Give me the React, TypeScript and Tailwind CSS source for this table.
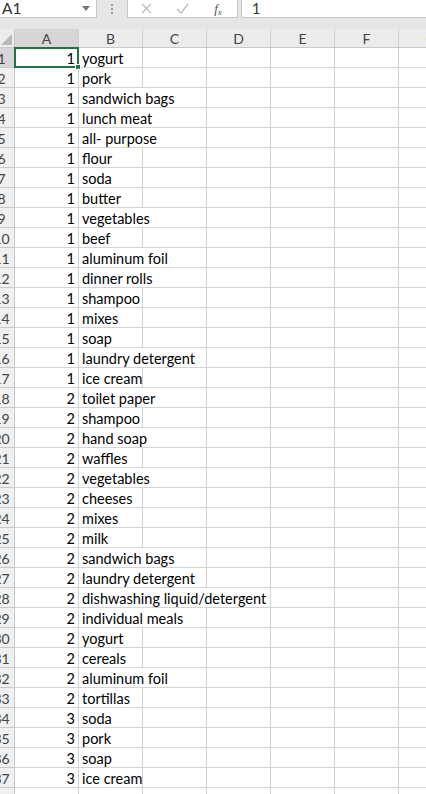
import * as React from "react";

type Row = { n: number; item: string; span: number };

// span = how many columns the text in B runs over (Excel overflow)
const rows: Row[] = [
  { n: 1, item: "yogurt", span: 1 },
  { n: 1, item: "pork", span: 1 },
  { n: 1, item: "sandwich bags", span: 2 },
  { n: 1, item: "lunch meat", span: 2 },
  { n: 1, item: "all- purpose", span: 2 },
  { n: 1, item: "flour", span: 1 },
  { n: 1, item: "soda", span: 1 },
  { n: 1, item: "butter", span: 1 },
  { n: 1, item: "vegetables", span: 2 },
  { n: 1, item: "beef", span: 1 },
  { n: 1, item: "aluminum foil", span: 2 },
  { n: 1, item: "dinner rolls", span: 2 },
  { n: 1, item: "shampoo", span: 1 },
  { n: 1, item: "mixes", span: 1 },
  { n: 1, item: "soap", span: 1 },
  { n: 1, item: "laundry detergent", span: 2 },
  { n: 1, item: "ice cream", span: 1 },
  { n: 2, item: "toilet paper", span: 2 },
  { n: 2, item: "shampoo", span: 1 },
  { n: 2, item: "hand soap", span: 2 },
  { n: 2, item: "waffles", span: 1 },
  { n: 2, item: "vegetables", span: 2 },
  { n: 2, item: "cheeses", span: 1 },
  { n: 2, item: "mixes", span: 1 },
  { n: 2, item: "milk", span: 1 },
  { n: 2, item: "sandwich bags", span: 2 },
  { n: 2, item: "laundry detergent", span: 2 },
  { n: 2, item: "dishwashing liquid/detergent", span: 3 },
  { n: 2, item: "individual meals", span: 2 },
  { n: 2, item: "yogurt", span: 1 },
  { n: 2, item: "cereals", span: 1 },
  { n: 2, item: "aluminum foil", span: 2 },
  { n: 2, item: "tortillas", span: 1 },
  { n: 3, item: "soda", span: 1 },
  { n: 3, item: "pork", span: 1 },
  { n: 3, item: "soap", span: 1 },
  { n: 3, item: "ice cream", span: 1 },
];

const cols = ["A", "B", "C", "D", "E", "F", "G"];
const spanW = ["", "w-[64px]", "w-[128px]", "w-[192px]"];

function RowHead({ label, active }: { label: string; active?: boolean }) {
  return (
    <div
      className={`w-[26px] shrink-0 h-[20px] flex items-center justify-center pt-[2px] border-r border-b border-[#c8c8c8] text-[14px] text-[#444] ${
        active ? "bg-[#d6d6d6]" : "bg-[#f0f0f0]"
      }`}>
      {label}
    </div>
  );
}

function Cell({ w = "w-[64px]", children, right }: { w?: string; children?: React.ReactNode; right?: boolean }) {
  return (
    <div
      className={`${w} shrink-0 h-[20px] border-r border-b border-[#d4d4d4] px-[3px] pt-[2px] flex items-center whitespace-nowrap ${
        right ? "justify-end" : "justify-start"
      }`}>
      {children}
    </div>
  );
}

function FormulaBar() {
  return (
    <div className="h-[29px] bg-[#e6e6e6] flex items-start">
      <div className="w-[97px] h-[18px] bg-white border-r border-b border-[#c6c6c6] flex items-center justify-between pl-[2px] pr-[6px]">
        <span className="text-[15.5px] text-[#333] leading-none">A1</span>
        <svg width="8" height="5" viewBox="0 0 8 5">
          <path d="M0 0h8L4 5z" fill="#777" />
        </svg>
      </div>
      <div className="w-[30px] h-[18px] flex items-center justify-center">
        <span className="flex flex-col gap-[2px]">
          <span className="w-[2px] h-[2px] bg-[#999]" />
          <span className="w-[2px] h-[2px] bg-[#999]" />
          <span className="w-[2px] h-[2px] bg-[#999]" />
        </span>
      </div>
      <div className="w-[111px] h-[18px] bg-white border-l border-r border-b border-[#c6c6c6] flex items-center">
        <div className="w-[36px] flex justify-center">
          <svg width="11" height="11" viewBox="0 0 11 11">
            <path d="M1 1l9 9M10 1l-9 9" stroke="#bbb" strokeWidth="1.2" />
          </svg>
        </div>
        <div className="w-[36px] flex justify-center">
          <svg width="13" height="11" viewBox="0 0 13 11">
            <path d="M1 6l4 4 7-9" stroke="#bbb" strokeWidth="1.3" fill="none" />
          </svg>
        </div>
        <div className="w-[36px] flex justify-center">
          <span className="italic text-[13px] text-[#555] font-['Liberation_Serif',serif]">
            f<sub className="text-[9px]">x</sub>
          </span>
        </div>
      </div>
      <div className="w-[3px]" />
      <div className="flex-1 h-[18px] bg-white border-l border-b border-[#c6c6c6] flex items-center pl-[10px]">
        <span className="text-[14.5px] text-[#333]">1</span>
      </div>
    </div>
  );
}

export default function App() {
  return (
    <div className="w-[426px] h-[794px] overflow-hidden bg-white font-['Lato','Noto_Sans',sans-serif] text-[14.5px] text-black">
      <FormulaBar />
      <div className="ml-[-11px] w-[480px]">
        {/* column headers */}
        <div className="flex h-[19px] bg-[#ececec] border-b border-[#c8c8c8]">
          <div className="w-[26px] shrink-0 border-r border-[#c8c8c8] flex items-end justify-end p-[2px]">
            <svg width="11" height="11" viewBox="0 0 11 11">
              <path d="M11 0v11H0z" fill="#b9b9b9" />
            </svg>
          </div>
          {cols.map((c) => (
            <div
              key={c}
              className={`w-[64px] shrink-0 border-r border-[#d0d0d0] flex items-center justify-center text-[14px] text-[#444] ${
                c === "A" ? "bg-[#d6d6d6]" : ""
              }`}>
              {c}
            </div>
          ))}
        </div>
        {rows.map((r, i) => (
          <div key={i} className="flex">
            <RowHead label={String(i + 1)} active={i === 0} />
            <div className="relative">
              <Cell right>{r.n}</Cell>
              {i === 0 && (
                <>
                  <div className="absolute left-[-1px] top-[-1px] w-[65px] h-[21px] border-2 border-[#217346]" />
                  <div className="absolute left-[60px] top-[16px] w-[6px] h-[6px] bg-[#217346] border border-white" />
                </>
              )}
            </div>
            <Cell w={spanW[r.span]}>{r.item}</Cell>
            {Array.from({ length: 6 - r.span }).map((_, k) => (
              <Cell key={k} />
            ))}
          </div>
        ))}
        <div className="flex">
          <RowHead label="38" />
          {Array.from({ length: 7 }).map((_, k) => (
            <Cell key={k} />
          ))}
        </div>
      </div>
    </div>
  );
}
